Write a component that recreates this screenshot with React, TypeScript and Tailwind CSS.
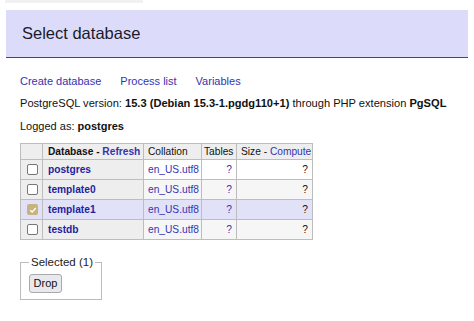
const rows = [
  { name: "postgres", checked: false, odd: false },
  { name: "template0", checked: false, odd: true },
  { name: "template1", checked: true, odd: false },
  { name: "testdb", checked: false, odd: true },
];

function Box({ checked }: { checked: boolean }) {
  if (checked) {
    return (
      <span className="flex w-[11px] h-[11px] rounded-[2px] bg-[#c8b37e] items-center justify-center">
        <svg viewBox="0 0 10 10" className="w-[8px] h-[8px]">
          <path d="M1.5 5.2 L4 7.5 L8.5 2.5" fill="none" stroke="#fff" strokeWidth="1.6" />
        </svg>
      </span>
    );
  }
  return <span className="block w-[11px] h-[11px] rounded-[2px] border border-[#777] bg-white" />;
}

export default function App() {
  return (
    <div className="w-[474px] h-[321px] bg-white overflow-hidden text-[11px] text-[#111] font-['Liberation_Sans',Arial,sans-serif]">
      <div className="ml-[5px] w-[138px] h-[3px] bg-[#f1f1f1]" />
      <div className="mt-[7px] mx-[6px] h-[48px] bg-[#dcdcfa] border-b border-[#4a4a55] flex items-center pl-[16px]">
        <h1 className="text-[16.5px] text-[#1a1a2a] font-normal">Select database</h1>
      </div>

      <div className="mt-[16px] pl-[20px] h-[14px] flex items-center gap-[19px] text-[#3434b0]">
        <span>Create database</span>
        <span>Process list</span>
        <span>Variables</span>
      </div>

      <div className="mt-[8px] pl-[20px] h-[14px] flex items-center text-[11.1px]">
        <span>
          PostgreSQL version: <b>15.3 (Debian 15.3-1.pgdg110+1)</b> through PHP extension <b>PgSQL</b>
        </span>
      </div>

      <div className="mt-[9px] pl-[20px] h-[14px] flex items-center">
        <span>
          Logged as: <b>postgres</b>
        </span>
      </div>

      <table className="mt-[10px] ml-[20px] w-[292px] table-fixed border-collapse border border-[#bdbdbd] whitespace-nowrap text-[10.2px] leading-[13px]">
        <colgroup>
          <col className="w-[22px]" />
          <col className="w-[101px]" />
          <col className="w-[58px]" />
          <col className="w-[35px]" />
          <col className="w-[76px]" />
        </colgroup>
        <thead>
          <tr className="h-[16px] bg-[#eeeeee]">
            <td className="border border-[#bdbdbd]" />
            <th className="border border-[#bdbdbd] text-left px-[5px] font-bold">
              Database - <span className="text-[#3434b0]">Refresh</span>
            </th>
            <th className="border border-[#bdbdbd] text-left px-[4px] font-normal">Collation</th>
            <th className="border border-[#bdbdbd] text-left px-[2px] font-normal">Tables</th>
            <th className="border border-[#bdbdbd] text-left px-[4px] font-normal">
              Size - <span className="text-[#3434b0]">Compute</span>
            </th>
          </tr>
        </thead>
        <tbody>
          {rows.map((r) => {
            const td = r.checked ? "bg-[#e1e1f8]" : r.odd ? "bg-[#f6f6f6]" : "bg-white";
            const th = r.checked ? "bg-[#e1e1f8]" : "bg-[#eeeeee]";
            return (
              <tr key={r.name} className="h-[20px]">
                <td className={`border border-[#bdbdbd] pl-[6px] ${th}`}>
                  <Box checked={r.checked} />
                </td>
                <th className={`border border-[#bdbdbd] text-left px-[5px] font-bold text-[#1f1fa0] ${th}`}>{r.name}</th>
                <td className={`border border-[#bdbdbd] px-[4px] text-[#3434b0] ${td}`}>en_US.utf8</td>
                <td className={`border border-[#bdbdbd] px-[4px] text-right text-[#3434b0] ${td}`}>?</td>
                <td className={`border border-[#bdbdbd] px-[4px] text-right ${td}`}>?</td>
              </tr>
            );
          })}
        </tbody>
      </table>

      <fieldset className="mt-[16px] ml-[20px] w-[82px] h-[44px] border border-[#bcbcbc] pl-[8px] pr-[4px] pt-0 pb-[6px]">
        <legend className="px-[2px] text-[11.5px] leading-[13px] text-[#222]">Selected (1)</legend>
        <button className="mt-[5px] w-[33px] h-[19px] bg-[#e9e9ed] border border-[#a9a9b0] rounded-[3px] text-[11px] text-[#111] flex items-center justify-center">
          Drop
        </button>
      </fieldset>
    </div>
  );
}
